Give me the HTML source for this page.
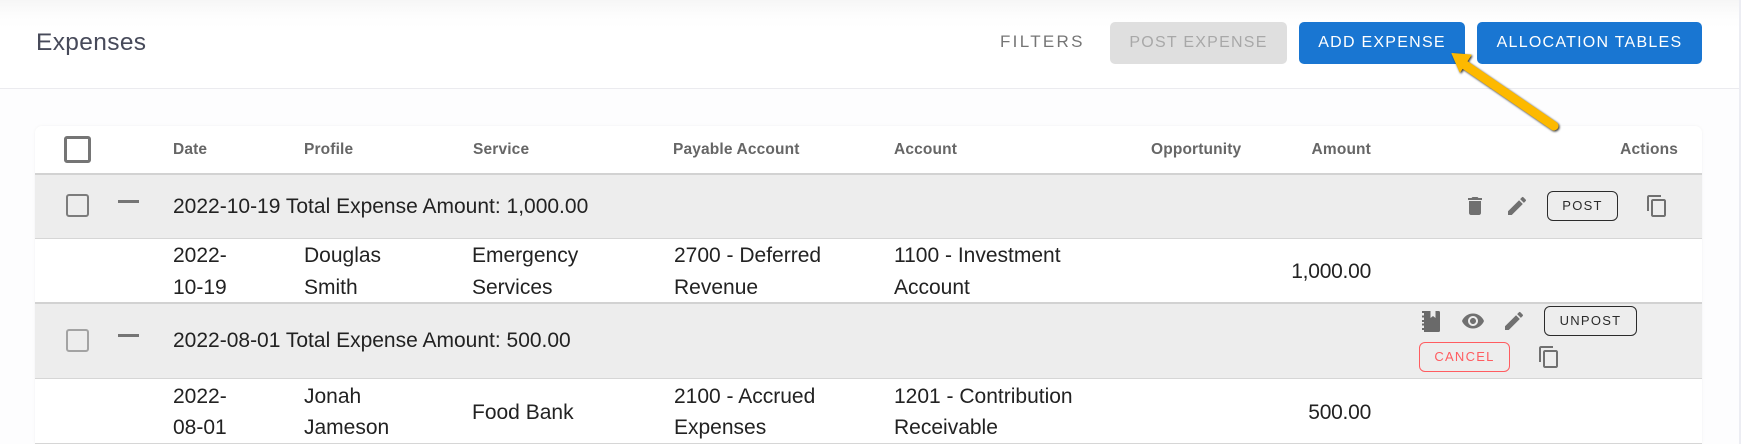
<!DOCTYPE html>
<html><head><meta charset="utf-8"><style>
html,body{margin:0;padding:0;width:1741px;height:444px;overflow:hidden;background:#fdfdfe}
body{position:relative;font-family:"Liberation Sans",Arial,sans-serif}
.a{position:absolute}
.t{position:absolute;white-space:nowrap;line-height:32px;color:#222;font-size:21px;letter-spacing:0}
.h{position:absolute;white-space:nowrap;line-height:20px;top:140px;color:#666;font-size:15.5px;font-weight:bold;letter-spacing:.15px}
.r{text-align:right}
.btn{position:absolute;top:22px;height:42px;line-height:41px;border-radius:5px;text-align:center;font-size:16px;letter-spacing:1.25px;color:#fff;background:#1976d2;white-space:nowrap}
.sb{position:absolute;box-sizing:border-box;height:30px;line-height:28px;border:1px solid #2b2b2b;border-radius:6px;text-align:center;font-size:13px;letter-spacing:1.25px;color:#2b2b2b;background:transparent;white-space:nowrap}
.line{position:absolute;left:35px;width:1667px;background:#d6d6d6}
.grp{position:absolute;left:35px;width:1667px;background:#ededed}
svg.i{position:absolute;width:24px;height:24px;fill:#707070}
.cb{position:absolute;box-sizing:border-box;border-radius:3px;border:3px solid #757575}
.cs{border-width:2.5px;border-color:#7c7c7c}
</style></head><body>
<div class="a" style="left:0;top:0;width:1739px;height:88px;background:linear-gradient(#f6f6f6 0,#fdfdfd 16px,#fff 28px)"></div>
<div class="a" style="left:0;top:88px;width:1739px;height:1px;background:#ebebef"></div>
<div class="a" style="left:1739px;top:0;width:2px;height:444px;background:#ecedf3"></div>
<div class="t" style="left:36px;top:27px;font-size:24.5px;letter-spacing:.35px;color:#474a5a">Expenses</div>
<div class="t" style="left:1000px;top:26px;font-size:17px;letter-spacing:2.3px;color:#757575">FILTERS</div>
<div class="btn" style="left:1110px;width:177px;background:#dfdfdf;color:#a8a8a8;">POST EXPENSE</div>
<div class="btn" style="left:1299px;width:166px">ADD EXPENSE</div>
<div class="btn" style="left:1477px;width:225px">ALLOCATION TABLES</div>

<div class="a" style="left:35px;top:126px;width:1667px;height:318px;background:#fff;border-radius:7px 7px 0 0;box-shadow:0 0 3px rgba(0,0,0,.05)"></div>
<div class="cb" style="left:64px;top:136px;width:27px;height:27px"></div>
<div class="h" style="left:173px">Date</div>
<div class="h" style="left:304px">Profile</div>
<div class="h" style="left:473px">Service</div>
<div class="h" style="left:673px">Payable Account</div>
<div class="h" style="left:894px">Account</div>
<div class="h" style="left:1151px">Opportunity</div>
<div class="h r" style="left:1271px;width:100px">Amount</div>
<div class="h r" style="left:1578px;width:100px">Actions</div>

<div class="grp" style="top:173px;height:65px"></div>
<div class="line" style="top:173px;height:2px;background:#d2d2d2"></div>
<div class="line" style="top:238px;height:1px"></div>
<div class="cb cs" style="left:66px;top:194px;width:23px;height:23px"></div>
<div class="a" style="left:118px;top:200px;width:21px;height:3px;background:#757575"></div>
<div class="t" style="left:173px;top:191px">2022-10-19 Total Expense Amount: 1,000.00</div>
<svg class="i" style="left:1463px;top:194px" viewBox="0 0 24 24"><path d="M6 19c0 1.1.9 2 2 2h8c1.1 0 2-.9 2-2V7H6v12zM19 4h-3.5l-1-1h-5l-1 1H5v2h14V4z"/></svg>
<svg class="i" style="left:1505px;top:194px" viewBox="0 0 24 24"><path d="M3 17.25V21h3.75L17.81 9.94l-3.75-3.75L3 17.25zM20.71 7.04c.39-.39.39-1.02 0-1.41l-2.34-2.34a.9959.9959 0 0 0-1.41 0l-1.83 1.83 3.75 3.75 1.83-1.83z"/></svg>
<div class="sb" style="left:1547px;top:191px;width:71px">POST</div>
<svg class="i" style="left:1645px;top:194px" viewBox="0 0 24 24"><path d="M16 1H4c-1.1 0-2 .9-2 2v14h2V3h12V1zm3 4H8c-1.1 0-2 .9-2 2v14c0 1.1.9 2 2 2h11c1.1 0 2-.9 2-2V7c0-1.1-.9-2-2-2zm0 16H8V7h11v14z"/></svg>

<div class="t" style="left:173px;top:240px">2022-</div>
<div class="t" style="left:173px;top:272px">10-19</div>
<div class="t" style="left:304px;top:240px">Douglas</div>
<div class="t" style="left:304px;top:272px">Smith</div>
<div class="t" style="left:472px;top:240px">Emergency</div>
<div class="t" style="left:472px;top:272px">Services</div>
<div class="t" style="left:674px;top:240px">2700 - Deferred</div>
<div class="t" style="left:674px;top:272px">Revenue</div>
<div class="t" style="left:894px;top:240px">1100 - Investment</div>
<div class="t" style="left:894px;top:272px">Account</div>
<div class="t r" style="left:1200px;width:171px;top:256px;letter-spacing:-.25px">1,000.00</div>

<div class="grp" style="top:302px;height:76px"></div>
<div class="line" style="top:302px;height:2px;background:#d2d2d2"></div>
<div class="line" style="top:378px;height:1px"></div>
<div class="cb cs" style="left:66px;top:329px;width:23px;height:23px;border-color:#a3a3a3"></div>
<div class="a" style="left:118px;top:334px;width:21px;height:3px;background:#757575"></div>
<div class="t" style="left:173px;top:325px">2022-08-01 Total Expense Amount: 500.00</div>
<svg class="a" style="left:1422px;top:311px;width:19px;height:21px" viewBox="0 0 19 21"><path fill="#6a6a6a" d="M2 0h6.500v7l2.500-2 2.500 2V0H16.500c1.100 0 1.500.6 1.500 1.500v18c0 .9-.4 1.500-1.500 1.500H2v-2H0v-2h2v-2.500H0v-2h2V11H0V9h2V6.500H0v-2h2V2H0V0z"/></svg>
<svg class="i" style="left:1461px;top:309px" viewBox="0 0 24 24"><path d="M12 4.500C7 4.500 2.730 7.610 1 12c1.730 4.390 6 7.500 11 7.500s9.270-3.110 11-7.500c-1.730-4.390-6-7.500-11-7.500zM12 17c-2.760 0-5-2.240-5-5s2.240-5 5-5 5 2.240 5 5-2.240 5-5 5zm0-8c-1.660 0-3 1.340-3 3s1.340 3 3 3 3-1.340 3-3-1.340-3-3-3z"/></svg>
<svg class="i" style="left:1502px;top:309px" viewBox="0 0 24 24"><path d="M3 17.25V21h3.75L17.81 9.94l-3.75-3.75L3 17.25zM20.71 7.04c.39-.39.39-1.02 0-1.41l-2.34-2.34a.9959.9959 0 0 0-1.41 0l-1.83 1.83 3.75 3.75 1.83-1.83z"/></svg>
<div class="sb" style="left:1544px;top:306px;width:93px">UNPOST</div>
<div class="sb" style="left:1419px;top:342px;width:91px;border-color:#ff5c60;color:#ff5c60">CANCEL</div>
<svg class="i" style="left:1537px;top:345px" viewBox="0 0 24 24"><path d="M16 1H4c-1.1 0-2 .9-2 2v14h2V3h12V1zm3 4H8c-1.1 0-2 .9-2 2v14c0 1.1.9 2 2 2h11c1.1 0 2-.9 2-2V7c0-1.1-.9-2-2-2zm0 16H8V7h11v14z"/></svg>

<div class="t" style="left:173px;top:381px">2022-</div>
<div class="t" style="left:173px;top:412px">08-01</div>
<div class="t" style="left:304px;top:381px">Jonah</div>
<div class="t" style="left:304px;top:412px">Jameson</div>
<div class="t" style="left:472px;top:397px">Food Bank</div>
<div class="t" style="left:674px;top:381px">2100 - Accrued</div>
<div class="t" style="left:674px;top:412px">Expenses</div>
<div class="t" style="left:894px;top:381px">1201 - Contribution</div>
<div class="t" style="left:894px;top:412px">Receivable</div>
<div class="t r" style="left:1200px;width:171px;top:397px;letter-spacing:-.25px">500.00</div>
<div class="line" style="top:443px;height:1px"></div>

<svg class="a" style="left:1430px;top:40px;width:160px;height:100px;overflow:visible;filter:drop-shadow(1px 1.5px 1px rgba(0,0,0,.85))" viewBox="0 0 160 100">
<path d="M35 25L124 86" stroke="#fdb900" stroke-width="9" stroke-linecap="round" fill="none"/>
<path d="M22 13.500L41 15 30 32z" fill="#fdb900" stroke="#fdb900" stroke-width="1" stroke-linejoin="round"/>
</svg>
</body></html>
